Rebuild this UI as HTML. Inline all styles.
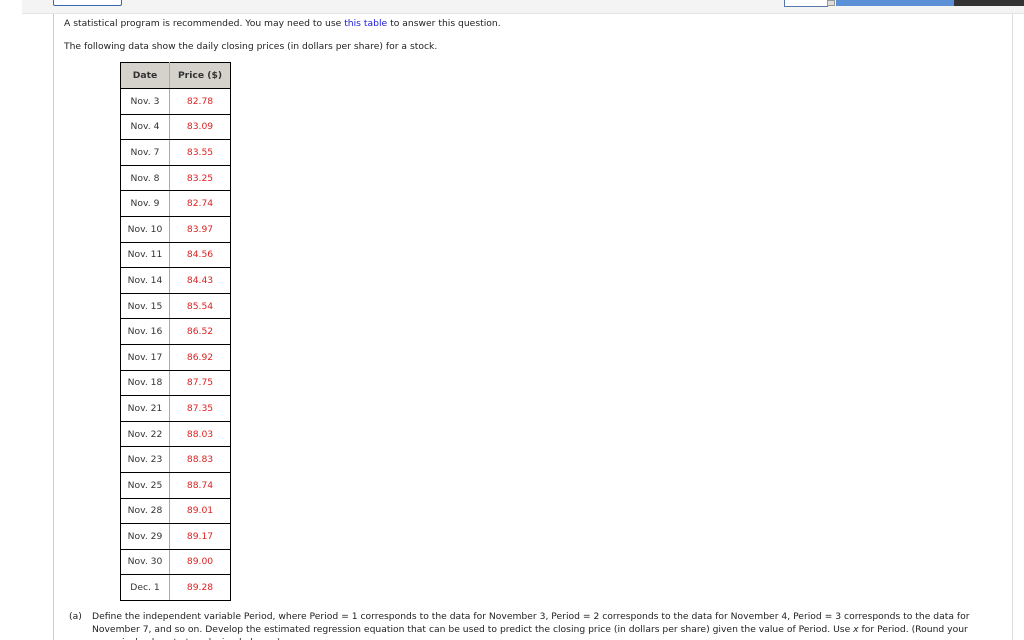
<!DOCTYPE html>
<html><head><style>
html,body{margin:0;width:1024px;height:640px;overflow:hidden}
body{background:#fff;position:relative;font-family:"DejaVu Sans","Liberation Sans",sans-serif;font-size:9.2px;color:#222}
.top{position:absolute;left:22px;top:0;width:1002px;height:13px;background:#f4f4f4;border-bottom:1px solid #e4e4e4}
.btn{position:absolute;left:53px;top:-3px;width:67px;height:7px;border:1.5px solid #3a6aa8;border-radius:2px;background:#fff}
.dd{position:absolute;left:784px;top:-2px;width:42px;height:7px;border:1px solid #5577aa;background:#fff}
.dda{position:absolute;left:827px;top:0;width:8px;height:6px;background:#ddd;border:1px solid #999;box-sizing:border-box}
.blue{position:absolute;left:836px;top:0;width:118px;height:6px;background:#5b8fd6}
.dark{position:absolute;left:954px;top:0;width:70px;height:6px;background:#333}
.lb{position:absolute;left:53px;top:14px;width:1px;height:626px;background:#ccc}
.rb{position:absolute;left:1012px;top:14px;width:1px;height:626px;background:#ddd}
p{position:absolute;margin:0;white-space:nowrap}
a{color:#1a1adb;text-decoration:none}
table{position:absolute;left:120px;top:62px;border-collapse:collapse;border:1px solid #000}
td,th{height:24.6px;padding:0;text-align:center;border-bottom:1px solid #000;font-size:9.2px}
th{background:#d5d2cc;font-weight:bold;color:#333;height:25px;border-bottom:1.5px solid #000}
td:first-child,th:first-child{width:48px;border-right:1px solid #aaa;color:#333}
td:last-child,th:last-child{width:60px}
td:last-child{color:#d22}
</style></head><body>
<div class="top"></div><div class="btn"></div><div class="dd"></div><div class="dda"></div><div class="blue"></div><div class="dark"></div>
<div class="lb"></div><div class="rb"></div>
<p style="left:64px;top:18px">A statistical program is recommended. You may need to use <a>this table</a> to answer this question.</p>
<p style="left:64px;top:41px">The following data show the daily closing prices (in dollars per share) for a stock.</p>
<table>
<tr><th>Date</th><th>Price ($)</th></tr>
<tr><td>Nov. 3</td><td>82.78</td></tr>
<tr><td>Nov. 4</td><td>83.09</td></tr>
<tr><td>Nov. 7</td><td>83.55</td></tr>
<tr><td>Nov. 8</td><td>83.25</td></tr>
<tr><td>Nov. 9</td><td>82.74</td></tr>
<tr><td>Nov. 10</td><td>83.97</td></tr>
<tr><td>Nov. 11</td><td>84.56</td></tr>
<tr><td>Nov. 14</td><td>84.43</td></tr>
<tr><td>Nov. 15</td><td>85.54</td></tr>
<tr><td>Nov. 16</td><td>86.52</td></tr>
<tr><td>Nov. 17</td><td>86.92</td></tr>
<tr><td>Nov. 18</td><td>87.75</td></tr>
<tr><td>Nov. 21</td><td>87.35</td></tr>
<tr><td>Nov. 22</td><td>88.03</td></tr>
<tr><td>Nov. 23</td><td>88.83</td></tr>
<tr><td>Nov. 25</td><td>88.74</td></tr>
<tr><td>Nov. 28</td><td>89.01</td></tr>
<tr><td>Nov. 29</td><td>89.17</td></tr>
<tr><td>Nov. 30</td><td>89.00</td></tr>
<tr><td>Dec. 1</td><td>89.28</td></tr>
</table>
<p style="left:69px;top:611px">(a)</p>
<p style="left:92px;top:611px">Define the independent variable Period, where Period = 1 corresponds to the data for November 3, Period = 2 corresponds to the data for November 4, Period = 3 corresponds to the data for</p>
<p style="left:92px;top:624px">November 7, and so on. Develop the estimated regression equation that can be used to predict the closing price (in dollars per share) given the value of Period. Use <i>x</i> for Period. (Round your</p>
<p style="left:92px;top:637px">numerical values to two decimal places.)</p>
</body></html>
